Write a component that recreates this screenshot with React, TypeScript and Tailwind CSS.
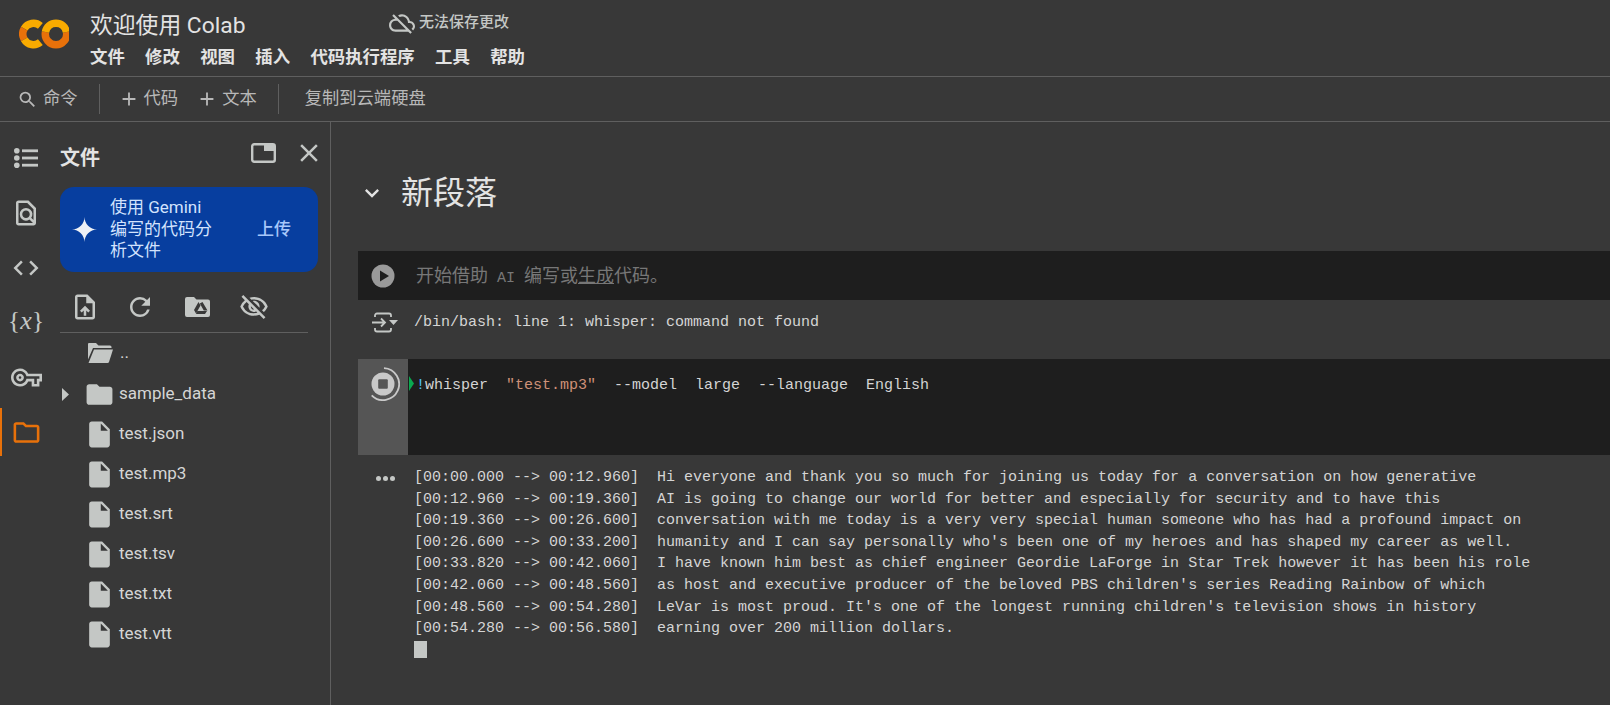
import React from 'react';
import {
  MdAdd,
  MdClose,
  MdCode,
  MdExpandMore,
  MdFolder,
  MdInsertDriveFile,
  MdOutlineCloudOff,
  MdOutlineFindInPage,
  MdOutlineFolder,
  MdOutlineUploadFile,
  MdOutlineVisibilityOff,
  MdOutlineVpnKey,
  MdRefresh,
  MdSearch,
} from 'react-icons/md';

const menus = ['文件', '修改', '视图', '插入', '代码执行程序', '工具', '帮助'];
const files = ['test.json', 'test.mp3', 'test.srt', 'test.tsv', 'test.txt', 'test.vtt'];
const outputLines = [
  "[00:00.000 --> 00:12.960]  Hi everyone and thank you so much for joining us today for a conversation on how generative",
  "[00:12.960 --> 00:19.360]  AI is going to change our world for better and especially for security and to have this",
  "[00:19.360 --> 00:26.600]  conversation with me today is a very very special human someone who has had a profound impact on",
  "[00:26.600 --> 00:33.200]  humanity and I can say personally who's been one of my heroes and has shaped my career as well.",
  "[00:33.820 --> 00:42.060]  I have known him best as chief engineer Geordie LaForge in Star Trek however it has been his role",
  "[00:42.060 --> 00:48.560]  as host and executive producer of the beloved PBS children's series Reading Rainbow of which",
  "[00:48.560 --> 00:54.280]  LeVar is most proud. It's one of the longest running children's television shows in history",
  "[00:54.280 --> 00:56.580]  earning over 200 million dollars.",
];

const ColabLogo = () => (
  <svg viewBox="0 0 50 30" className="w-[50px] h-[30px]" fill="none" strokeWidth="7.5">
    <path d="M21.38 6.8A10.7 10.7 0 0 0 5.23 9.65" stroke="#f9ab00" />
    <path d="M5.23 9.65A10.7 10.7 0 0 0 5.23 20.35" stroke="#e8710a" />
    <path d="M5.23 20.35A10.7 10.7 0 0 0 21.38 23.2" stroke="#f9ab00" />
    <path d="M47.51 13A10.7 10.7 0 1 1 26.49 13" stroke="#e8710a" />
    <path d="M26.49 13A10.7 10.7 0 0 1 47.51 13" stroke="#f9ab00" />
  </svg>
);

const Divider = () => <div className="w-px h-[30px] bg-[#5f5f5f]" />;

const ListIcon = () => (
  <svg viewBox="0 0 24 20" className="w-[24px] h-[20px]" fill="#c4c7c5">
    <circle cx="2.8" cy="2.8" r="2.8" />
    <circle cx="2.8" cy="10" r="2.8" />
    <circle cx="2.8" cy="17.2" r="2.8" />
    <rect x="8" y="1.4" width="16" height="2.8" />
    <rect x="8" y="8.6" width="16" height="2.8" />
    <rect x="8" y="15.8" width="16" height="2.8" />
  </svg>
);

const DriveFolder = () => (
  <svg viewBox="0 0 25 20" className="w-[25px] h-[20px]">
    <path d="M2 0h7l2.5 2.5H23a2 2 0 0 1 2 2V18a2 2 0 0 1-2 2H2a2 2 0 0 1-2-2V2a2 2 0 0 1 2-2z" fill="#c4c7c5" />
    <path d="M13.5 5 15.5 8.5 11 16.5 9 13zM17.5 5 22.5 13.5H18.8L14.8 6.5zM12.5 14h9.5L20 17H11z" fill="#383838" />
  </svg>
);

const OpenFolder = () => (
  <svg viewBox="0 0 26 20" className="ml-[27px] w-[26px] h-[20px]" fill="#c4c7c5">
    <path d="M2 0h7l2.5 2.5H23a1.5 1.5 0 0 1 1.5 1.5v1H6L1 16.5V1a1 1 0 0 1 1-1z" />
    <path d="M7 6.5h19L22 19a1.5 1.5 0 0 1-1.4 1H1.5z" />
  </svg>
);

const OutputIcon = () => (
  <svg viewBox="0 0 26 21" className="w-[26px] h-[21px]" fill="none" stroke="#c4c7c5" strokeWidth="1.8">
    <path d="M3 5V3.5A2 2 0 0 1 5 1.5H17A2 2 0 0 1 19 3.5V5" />
    <path d="M0 10.5H13M9 6.5l4 4-4 4" />
    <path d="M3 16v1.5a2 2 0 0 0 2 2H17a2 2 0 0 0 2-2V16" />
    <path d="M17 8h9l-4.5 5z" fill="#c4c7c5" stroke="none" />
  </svg>
);

export default function App() {
  return (
    <div className="w-screen h-screen overflow-hidden flex flex-col bg-[#383838] text-[#e3e3e3] font-[Roboto,'Noto_Sans_CJK_SC',sans-serif]">
      {/* 顶部标题 */}
      <header className="h-[77px] shrink-0 flex border-b border-[#5f5f5f]">
        <div className="w-[90px] pl-[19px] pt-[19px]">
          <ColabLogo />
        </div>
        <div>
          <div className="h-[38px] mt-[7px] flex items-center">
            <span className="w-[299px] text-[22.8px]">欢迎使用 Colab</span>
            <MdOutlineCloudOff className="w-[26px] h-[26px] text-[#c4c7c5] -mt-[7px]" />
            <span className="ml-[4px] -mt-[7px] text-[15px] font-medium text-[#c4c7c5]">无法保存更改</span>
          </div>
          <nav className="h-[24px] flex items-center gap-[20.3px] text-[17.4px] font-bold">
            {menus.map((m) => (
              <span key={m}>{m}</span>
            ))}
          </nav>
        </div>
      </header>

      {/* 工具栏 */}
      <div className="h-[45px] shrink-0 flex items-center border-b border-[#5f5f5f] text-[17.3px] text-[#b8b8b8]">
        <MdSearch className="ml-[17px] w-[21px] h-[21px]" />
        <span className="ml-[5px]">命令</span>
        <div className="ml-[21px]"><Divider /></div>
        <MdAdd className="ml-[18px] w-[22px] h-[22px]" />
        <span className="ml-[4px]">代码</span>
        <MdAdd className="ml-[18px] w-[22px] h-[22px]" />
        <span className="ml-[4px]">文本</span>
        <div className="ml-[21px]"><Divider /></div>
        <span className="ml-[26px]">复制到云端硬盘</span>
      </div>

      <div className="flex-1 min-h-0 flex">
        {/* 左侧边栏 */}
        <aside className="w-[331px] shrink-0 flex border-r border-[#5f5f5f]">
          <div className="w-[60px] shrink-0 pt-[8px] text-[#c4c7c5]">
            <div className="h-[55px] flex items-center justify-center pr-[8px]">
              <ListIcon />
            </div>
            <div className="h-[55px] flex items-center justify-center pr-[8px]">
              <MdOutlineFindInPage className="w-[30px] h-[30px]" />
            </div>
            <div className="h-[55px] flex items-center justify-center pr-[8px]">
              <MdCode className="w-[30px] h-[30px]" />
            </div>
            <div className="h-[55px] flex items-center justify-center pr-[8px] pb-[4px] font-['Liberation_Serif',serif] text-[26px]">
              {'{'}<span className="italic">x</span>{'}'}
            </div>
            <div className="h-[55px] flex items-center justify-center pr-[8px]">
              <MdOutlineVpnKey className="w-[31px] h-[31px]" />
            </div>
            <div className="relative h-[55px] flex items-center justify-center pr-[8px] text-[#e8710a]">
              <div className="absolute left-0 top-[3px] w-[2px] h-[48px] bg-[#e8710a]" />
              <MdOutlineFolder className="w-[31px] h-[31px]" />
            </div>
          </div>

          <div className="flex-1 min-w-0">
            <div className="h-[50px] mt-[11px] flex items-center">
              <span className="text-[20px] font-bold">文件</span>
              <svg viewBox="0 0 25 20" className="ml-[151px] -mt-[11px] w-[25px] h-[20px]">
                <rect x="1.2" y="1.2" width="22.6" height="17.6" rx="2" fill="none" stroke="#c4c7c5" strokeWidth="2.4" />
                <rect x="13" y="1" width="11" height="7" fill="#c4c7c5" />
              </svg>
              <MdClose className="ml-[18px] -mt-[11px] w-[30px] h-[30px] text-[#c4c7c5]" />
            </div>

            <div className="mt-[4px] w-[258px] h-[85px] rounded-[14px] bg-[#073e9f] flex items-center pl-[12px]">
              <svg viewBox="0 0 24 24" className="w-[25px] h-[25px] shrink-0">
                <path d="M12 0C12 6.6 17.4 12 24 12C17.4 12 12 17.4 12 24C12 17.4 6.6 12 0 12C6.6 12 12 6.6 12 0Z" fill="#eef1f6" />
              </svg>
              <div className="ml-[13px] w-[110px] shrink-0 text-[17px] leading-[21.5px] text-[#d3e3fd]">
                使用 Gemini 编写的代码分析文件
              </div>
              <span className="ml-[37px] text-[17px] font-medium text-[#a8c7fa]">上传</span>
            </div>

            <div className="h-[60px] pt-[10px] flex items-center text-[#c4c7c5]">
              <MdOutlineUploadFile className="ml-[10px] w-[30px] h-[30px]" />
              <MdRefresh className="ml-[25px] w-[30px] h-[30px]" />
              <div className="ml-[30px]"><DriveFolder /></div>
              <MdOutlineVisibilityOff className="ml-[29px] w-[30px] h-[30px]" />
            </div>
            <div className="w-[248px] h-px bg-[#5f5f5f]" />

            <div className="text-[17px] text-[#d5d5d5]">
              <div className="h-[40px] flex items-center">
                <OpenFolder />
                <span className="ml-[7px]">..</span>
              </div>
              <div className="h-[40px] mt-[1px] flex items-center">
                <svg viewBox="0 0 7 13" className="ml-[2px] w-[7px] h-[13px]">
                  <path d="M0 0 7 6.5 0 13z" fill="#c4c7c5" />
                </svg>
                <MdFolder className="ml-[15px] w-[31px] h-[31px] text-[#c4c7c5]" />
                <span className="ml-[4px]">sample_data</span>
              </div>
              {files.map((f) => (
                <div key={f} className="h-[40px] flex items-center">
                  <MdInsertDriveFile className="ml-[24px] w-[31px] h-[31px] text-[#c4c7c5]" />
                  <span className="ml-[4px]">{f}</span>
                </div>
              ))}
            </div>
          </div>
        </aside>

        {/* 笔记本 */}
        <main className="flex-1 min-w-0 pl-[27px]">
          <div className="h-[60px] mt-[41px] flex items-center text-[#e3e3e3]">
            <MdExpandMore className="w-[28px] h-[28px]" />
            <span className="ml-[15px] text-[32px]">新段落</span>
          </div>

          <div className="mt-[28px] h-[49px] bg-[#1e1e1e] flex items-center">
            <div className="w-[50px] flex justify-center">
              <svg viewBox="0 0 24 24" className="w-[24px] h-[24px]">
                <circle cx="12" cy="12" r="11.5" fill="#9a9a9a" />
                <path d="M9 6.5 18 12 9 17.5z" fill="#1e1e1e" />
              </svg>
            </div>
            <div className="ml-[8px] pt-[4px] text-[#777] text-[15px] font-['Liberation_Mono','Noto_Sans_CJK_SC',monospace] whitespace-pre">
              <span className="text-[18px]">开始借助</span> AI <span className="text-[18px]">编写或<span className="underline">生成</span>代码。</span>
            </div>
          </div>

          <div className="h-[44px] flex items-center">
            <div className="w-[52px] pl-[14px]"><OutputIcon /></div>
            <pre className="ml-[4px] pt-[2px] text-[15px] text-[#d5d5d5] font-['Liberation_Mono',monospace]">/bin/bash: line 1: whisper: command not found</pre>
          </div>

          <div className="mt-[15px] h-[96px] bg-[#1e1e1e] flex">
            <div className="w-[50px] h-full bg-[#555] flex justify-center pt-[8px]">
              <svg viewBox="0 0 34 34" className="w-[34px] h-[34px]">
                <circle cx="17" cy="17" r="11.5" fill="#c9c9c9" />
                <rect x="12.2" y="12.2" width="9.6" height="9.6" rx="1" fill="#555" />
                <path d="M18 1.1A16 16 0 1 1 5.7 28.3" fill="none" stroke="#c9c9c9" strokeWidth="1.8" />
              </svg>
            </div>
            <div className="pt-[17px] flex items-start">
              <svg viewBox="0 0 5 15" className="ml-[1px] w-[5px] h-[15px] shrink-0">
                <path d="M0 0 5 7.5 0 15z" fill="#0aa84f" />
              </svg>
              <pre className="ml-[2px] text-[15px] leading-[20px] text-[#d4d4d4] font-['Liberation_Mono',monospace]">
                <span className="text-[#4fc1ff]">!</span>whisper  <span className="text-[#ce9178]">"test.mp3"</span>  --model  large  --language  English
              </pre>
            </div>
          </div>

          <div className="pt-[12px] flex">
            <div className="w-[54px] pt-[9px] flex justify-center gap-[2px] h-fit">
              <span className="w-[5px] h-[5px] rounded-full bg-[#c4c7c5]" />
              <span className="w-[5px] h-[5px] rounded-full bg-[#c4c7c5]" />
              <span className="w-[5px] h-[5px] rounded-full bg-[#c4c7c5]" />
            </div>
            <div className="ml-[2px]">
              {outputLines.map((line) => (
                <pre key={line} className="text-[15px] leading-[21.6px] text-[#d5d5d5] font-['Liberation_Mono',monospace]">
                  {line}
                </pre>
              ))}
              <div className="mt-[1.5px] w-[13px] h-[17px] bg-[#c4c7c5]" />
            </div>
          </div>
        </main>
      </div>
    </div>
  );
}
